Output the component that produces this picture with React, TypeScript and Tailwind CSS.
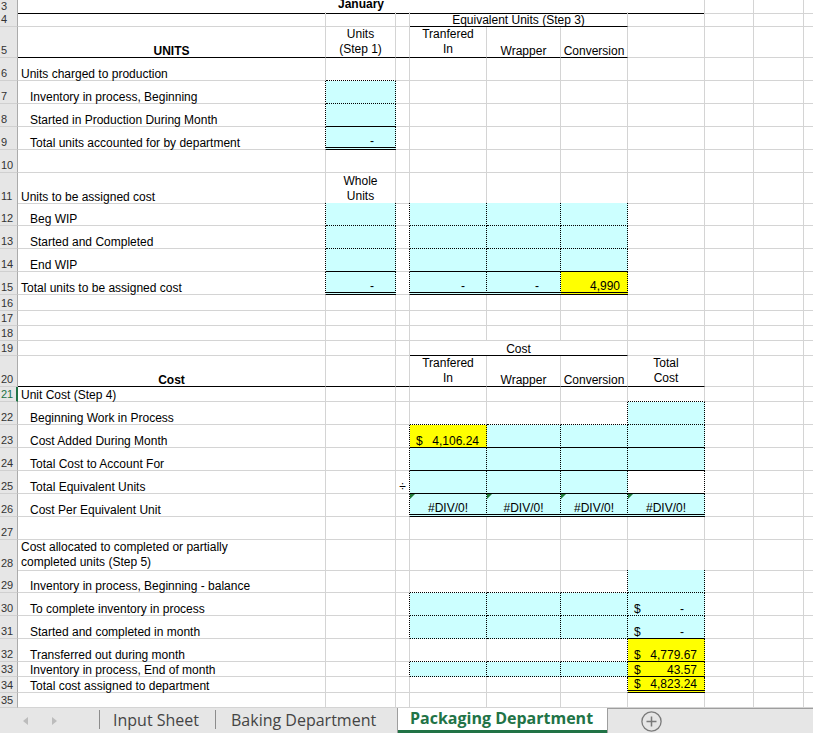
import type { ReactNode } from "react";

type Line = "grid" | "dot" | "solid" | "double";
type Fill = "cyan" | "yellow" | "white";

type Cell = {
  text?: ReactNode;
  align?: "l" | "c" | "r";
  bold?: boolean;
  indent?: boolean;
  fill?: Fill;
  span?: number;
  money?: string;
  pr?: string;
  err?: boolean;
  shift?: string;
};

type Row = { n: number; h: string; cells?: Record<number, Cell> };

const H12 = "h-[12px]";
const H15 = "h-[15px]";
const H16 = "h-[16px]";
const H23 = "h-[23px]";
const H30 = "h-[30px]";
const H31 = "h-[31px]";

// ===== sheet content =====
const rows: Row[] = [
  { n: 3, h: H12, cells: { 0: { text: "January", bold: true, align: "c", span: 7, shift: "relative -top-[3px]" } } },
  { n: 4, h: H15, cells: { 3: { text: "Equivalent Units (Step 3)", align: "c", span: 3 } } },
  {
    n: 5,
    h: H31,
    cells: {
      0: { text: "UNITS", bold: true, align: "c" },
      1: { text: <>Units<br />(Step 1)</>, align: "c" },
      3: { text: <>Tranfered<br />In</>, align: "c" },
      4: { text: "Wrapper", align: "c" },
      5: { text: "Conversion", align: "c" },
    },
  },
  { n: 6, h: H23, cells: { 0: { text: "Units charged to production" } } },
  { n: 7, h: H23, cells: { 0: { text: "Inventory in process, Beginning", indent: true }, 1: { fill: "cyan" } } },
  { n: 8, h: H23, cells: { 0: { text: "Started in Production During Month", indent: true }, 1: { fill: "cyan" } } },
  {
    n: 9,
    h: H23,
    cells: {
      0: { text: "Total units accounted for by department", indent: true },
      1: { fill: "cyan", text: "-", align: "r", pr: "pr-[21px]" },
    },
  },
  { n: 10, h: H23 },
  {
    n: 11,
    h: H30,
    cells: {
      0: { text: "Units to be assigned cost" },
      1: { text: <>Whole<br />Units</>, align: "c", shift: "relative top-[1px]" },
    },
  },
  { n: 12, h: H23, cells: { 0: { text: "Beg WIP", indent: true }, 1: { fill: "cyan" }, 3: { fill: "cyan" }, 4: { fill: "cyan" }, 5: { fill: "cyan" } } },
  { n: 13, h: H23, cells: { 0: { text: "Started and Completed", indent: true }, 1: { fill: "cyan" }, 3: { fill: "cyan" }, 4: { fill: "cyan" }, 5: { fill: "cyan" } } },
  { n: 14, h: H23, cells: { 0: { text: "End WIP", indent: true }, 1: { fill: "cyan" }, 3: { fill: "cyan" }, 4: { fill: "cyan" }, 5: { fill: "cyan" } } },
  {
    n: 15,
    h: H23,
    cells: {
      0: { text: "Total units to be assigned cost" },
      1: { fill: "cyan", text: "-", align: "r", pr: "pr-[21px]" },
      3: { fill: "cyan", text: "-", align: "r", pr: "pr-[21px]" },
      4: { fill: "cyan", text: "-", align: "r", pr: "pr-[21px]" },
      5: { fill: "yellow", text: "4,990", align: "r", pr: "pr-[7px]" },
    },
  },
  { n: 16, h: H16 },
  { n: 17, h: H15 },
  { n: 18, h: H15 },
  { n: 19, h: H15, cells: { 3: { text: "Cost", align: "c", span: 3 } } },
  {
    n: 20,
    h: H31,
    cells: {
      0: { text: "Cost", bold: true, align: "c" },
      3: { text: <>Tranfered<br />In</>, align: "c" },
      4: { text: "Wrapper", align: "c" },
      5: { text: "Conversion", align: "c" },
      6: { text: <>Total<br />Cost</>, align: "c" },
    },
  },
  { n: 21, h: H15, cells: { 0: { text: "Unit Cost (Step 4)" } } },
  { n: 22, h: H23, cells: { 0: { text: "Beginning Work in Process", indent: true }, 6: { fill: "cyan" } } },
  {
    n: 23,
    h: H23,
    cells: {
      0: { text: "Cost Added During Month", indent: true },
      3: { fill: "yellow", money: "4,106.24" },
      4: { fill: "cyan" },
      5: { fill: "cyan" },
      6: { fill: "cyan" },
    },
  },
  { n: 24, h: H23, cells: { 0: { text: "Total Cost to Account For", indent: true }, 3: { fill: "cyan" }, 4: { fill: "cyan" }, 5: { fill: "cyan" }, 6: { fill: "cyan" } } },
  {
    n: 25,
    h: H23,
    cells: {
      0: { text: "Total Equivalent Units", indent: true },
      2: { text: "÷", align: "c" },
      3: { fill: "cyan" },
      4: { fill: "cyan" },
      5: { fill: "cyan" },
      6: { fill: "white" },
    },
  },
  {
    n: 26,
    h: H23,
    cells: {
      0: { text: "Cost Per Equivalent Unit", indent: true },
      3: { fill: "cyan", text: "#DIV/0!", align: "c", err: true },
      4: { fill: "cyan", text: "#DIV/0!", align: "c", err: true },
      5: { fill: "cyan", text: "#DIV/0!", align: "c", err: true },
      6: { fill: "cyan", text: "#DIV/0!", align: "c", err: true },
    },
  },
  { n: 27, h: H23 },
  {
    n: 28,
    h: H30,
    cells: { 0: { text: <>Cost allocated to completed or partially<br />completed units (Step 5)</> } },
  },
  { n: 29, h: H23, cells: { 0: { text: "Inventory in process, Beginning - balance", indent: true }, 6: { fill: "cyan" } } },
  {
    n: 30,
    h: H23,
    cells: {
      0: { text: "To complete inventory in process", indent: true },
      3: { fill: "cyan" },
      4: { fill: "cyan" },
      5: { fill: "cyan" },
      6: { fill: "cyan", money: "-" },
    },
  },
  {
    n: 31,
    h: H23,
    cells: {
      0: { text: "Started and completed in month", indent: true },
      3: { fill: "cyan" },
      4: { fill: "cyan" },
      5: { fill: "cyan" },
      6: { fill: "cyan", money: "-" },
    },
  },
  { n: 32, h: H23, cells: { 0: { text: "Transferred out during month", indent: true }, 6: { fill: "yellow", money: "4,779.67" } } },
  {
    n: 33,
    h: H15,
    cells: {
      0: { text: "Inventory in process, End of month", indent: true },
      3: { fill: "cyan" },
      4: { fill: "cyan" },
      5: { fill: "cyan" },
      6: { fill: "yellow", money: "43.57" },
    },
  },
  { n: 34, h: H16, cells: { 0: { text: "Total cost assigned to department", indent: true }, 6: { fill: "yellow", money: "4,823.24" } } },
  { n: 35, h: H15 },
];

// ===== borders (bottom + right of each cell) =====
const bottom: Record<string, Line> = {};
const right: Record<string, Line> = {};
const key = (r: number, c: number) => `${r}:${c}`;

function box(r1: number, r2: number, c1: number, c2: number) {
  for (let r = r1; r <= r2; r++) {
    right[key(r, c1 - 1)] = "dot";
    for (let c = c1; c <= c2; c++) {
      bottom[key(r, c)] = "dot";
      right[key(r, c)] = "dot";
    }
  }
  for (let c = c1; c <= c2; c++) bottom[key(r1 - 1, c)] = "dot";
}

function under(r: number, c1: number, c2: number, s: Line) {
  for (let c = c1; c <= c2; c++) bottom[key(r, c)] = s;
}

box(7, 9, 1, 1);
box(12, 15, 1, 1);
box(12, 15, 3, 5);
box(22, 22, 6, 6);
box(23, 26, 3, 6);
box(29, 29, 6, 6);
box(30, 31, 3, 6);
box(33, 33, 3, 5);
box(32, 34, 6, 6);

under(3, 0, 6, "solid");
under(4, 3, 5, "solid");
under(5, 0, 5, "solid");
under(8, 1, 1, "solid");
under(9, 1, 1, "double");
under(11, 1, 1, "solid");
under(14, 1, 5, "solid");
under(14, 2, 2, "grid");
under(15, 1, 5, "double");
under(15, 2, 2, "grid");
under(19, 3, 5, "solid");
under(20, 0, 6, "solid");
under(23, 3, 6, "solid");
under(24, 3, 6, "solid");
under(25, 3, 6, "solid");
under(26, 3, 6, "double");
under(31, 6, 6, "solid");
under(32, 6, 6, "solid");
under(33, 6, 6, "solid");
under(34, 6, 6, "double");

const bottomCls: Record<Line, string> = {
  grid: "border-b border-b-[#d4d4d4]",
  dot: "border-b border-b-black [border-bottom-style:dotted]!",
  solid: "border-b border-b-black",
  double: "border-b-[3px] border-b-black [border-bottom-style:double]!",
};

const rightCls: Record<Line, string> = {
  grid: "border-r border-r-[#d4d4d4]",
  dot: "border-r border-r-black [border-right-style:dotted]!",
  solid: "border-r border-r-black",
  double: "border-r-[3px] border-r-black [border-right-style:double]!",
};

const fillCls: Record<Fill, string> = {
  cyan: "bg-[#ccffff]",
  yellow: "bg-[#ffff00]",
  white: "bg-white",
};

const spanCls: Record<number, string> = { 1: "", 3: "col-span-3", 7: "col-span-7" };

function SheetCell({ r, c, cell }: { r: number; c: number; cell: Cell }) {
  const span = cell.span ?? 1;
  const b = bottom[key(r, c)] ?? "grid";
  const rt = c + span - 1 === 9 ? "" : rightCls[right[key(r, c + span - 1)] ?? "grid"];
  const align =
    cell.align === "c"
      ? "justify-center text-center"
      : cell.align === "r"
        ? `justify-end ${cell.pr ?? "pr-[3px]"}`
        : cell.indent
          ? "pl-[12px]"
          : "pl-[3px]";
  const multi = typeof cell.text === "object";

  return (
    <div
      className={`relative flex items-end whitespace-nowrap ${spanCls[span]} ${bottomCls[b]} ${rt} ${
        cell.fill ? fillCls[cell.fill] : ""
      } ${cell.money ? "" : align} ${cell.bold ? "font-bold" : ""} ${multi ? "leading-[15px]" : "leading-[12px]"}`}
    >
      {cell.err && (
        <span className="absolute left-0 top-0 h-0 w-0 border-r-[5px] border-t-[5px] border-r-transparent border-t-[#1f7a36]" />
      )}
      {cell.money ? (
        <div className={`flex w-full justify-between pl-[6px] ${cell.money === "-" ? "pr-[20px]" : "pr-[7px]"}`}>
          <span>$</span>
          <span>{cell.money}</span>
        </div>
      ) : cell.shift ? (
        <span className={cell.shift}>{cell.text}</span>
      ) : (
        cell.text
      )}
    </div>
  );
}

function SheetRow({ row }: { row: Row }) {
  const active = row.n === 21;
  const out: ReactNode[] = [];
  for (let c = 0; c < 10; c++) {
    const cell = row.cells?.[c] ?? {};
    out.push(<SheetCell key={c} r={row.n} c={c} cell={cell} />);
    if (cell.span) c += cell.span - 1;
  }

  return (
    <div className={`grid grid-cols-[18px_308px_70px_14px_77px_74px_67px_77px_49px_50px_1fr] ${row.h}`}>
      <div
        className={`flex items-end border-b border-b-[#d0d0d0] bg-[#e6e6e6] pb-[1px] pl-[1px] text-[11px] leading-[12px] ${
          active ? "border-r-2 border-r-[#217346] text-[#217346]" : "border-r border-r-[#ababab] text-[#333]"
        }`}
      >
        {row.n}
      </div>
      {out}
    </div>
  );
}

function SheetTabs() {
  return (
    <div className="flex h-[25px] font-['Open_Sans',sans-serif] text-[16px] leading-[20px]">
      {/* ===== nav + inactive tabs ===== */}
      <div className="flex w-[398px] items-center border-r border-r-[#9e9e9e] bg-[#e6e6e6] pb-[2px] text-[#444]">
        <div className="flex w-[99px] items-center gap-[24px] pl-[23px] pt-[2px]">
          <svg width="5" height="8" viewBox="0 0 5 8">
            <polygon points="5,0 0,4 5,8" fill="#bcbcbc" />
          </svg>
          <svg width="5" height="8" viewBox="0 0 5 8">
            <polygon points="0,0 5,4 0,8" fill="#bcbcbc" />
          </svg>
        </div>
        <div className="h-[19px] w-px bg-[#8c8c8c]" />
        <span className="pl-[13px] pr-[16px]">Input Sheet</span>
        <div className="h-[19px] w-px bg-[#8c8c8c]" />
        <span className="pl-[15px]">Baking Department</span>
      </div>

      {/* ===== active tab ===== */}
      <div className="flex w-[209px] items-center border-b-[3px] border-b-[#217346] bg-white pb-[2px] pl-[12px] font-bold text-[#217346]">
        Packaging Department
      </div>

      {/* ===== new sheet ===== */}
      <div className="flex flex-1 items-center border-l border-t border-[#9e9e9e] bg-[#e6e6e6] pl-[33px]">
        <svg width="21" height="21" viewBox="0 0 21 21">
          <circle cx="10.5" cy="10.5" r="9.6" fill="none" stroke="#7a7a7a" strokeWidth="1.3" />
          <path d="M10.5 5.5v10M5.5 10.5h10" stroke="#7a7a7a" strokeWidth="1.5" />
        </svg>
      </div>
    </div>
  );
}

export default function App() {
  return (
    <div className="h-[733px] w-[813px] overflow-hidden bg-white font-['Liberation_Sans',Arial,sans-serif] text-[12px] text-black">
      {rows.map((row) => (
        <SheetRow key={row.n} row={row} />
      ))}
      <SheetTabs />
    </div>
  );
}
